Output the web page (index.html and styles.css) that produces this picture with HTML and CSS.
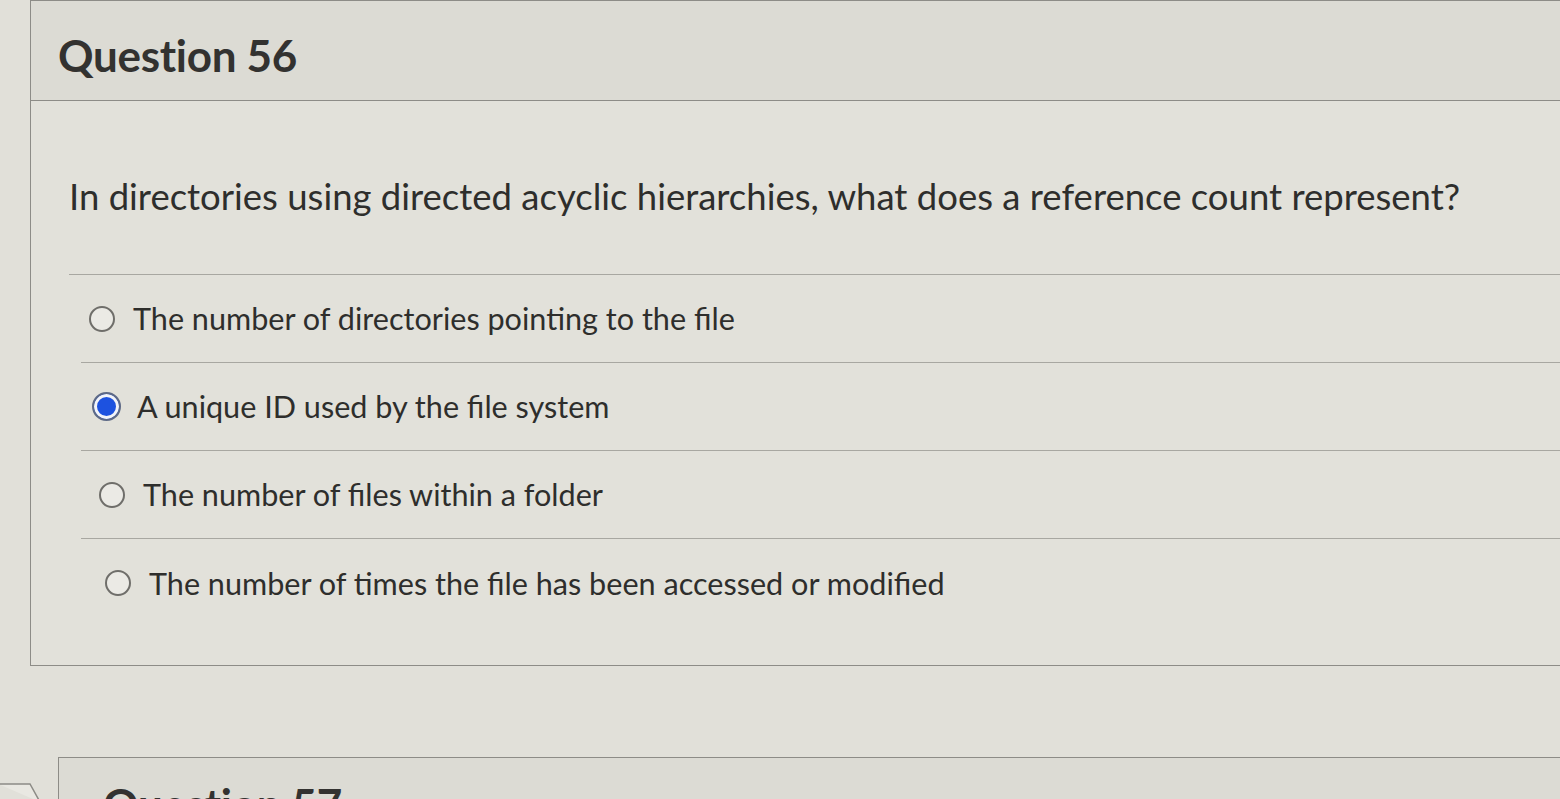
FILE: index.html
```html
<!DOCTYPE html>
<html lang="en">
<head>
  <meta charset="UTF-8" />
  <title>Quiz – Question 56</title>
  <link rel="stylesheet" href="styles.css">
</head>
<body>
  <div class="question-card">
    <div class="question-header">Question 56</div>
    <div class="question-body">
      <p class="question-text">In directories using directed acyclic hierarchies, what does a reference count represent?</p>
      <div class="answers">
        <label class="answer answer-1">
          <span class="radio"></span>
          <span class="answer-text">The number of directories pointing to the file</span>
        </label>
        <label class="answer answer-2">
          <span class="radio checked"></span>
          <span class="answer-text">A unique ID used by the file system</span>
        </label>
        <label class="answer answer-3">
          <span class="radio"></span>
          <span class="answer-text">The number of files within a folder</span>
        </label>
        <label class="answer answer-4">
          <span class="radio"></span>
          <span class="answer-text">The number of times the file has been accessed or modified</span>
        </label>
      </div>
    </div>
  </div>

  <div class="next-row">
    <svg class="flag" width="44" height="20" viewBox="0 0 44 20">
      <path d="M-2 1 H30 L40 19" fill="#e9e8e2" stroke="#8c8b86" stroke-width="1.5"/>
    </svg>
    <div class="question-card next-card">
      <div class="question-header">Question 57</div>
    </div>
  </div>
</body>
</html>
```

FILE: styles.css
```css
body, html {
  margin: 0;
  padding: 0;
  height: 100%;
  overflow: hidden;
  background: #e1e0d9;
  color: #2e2e2c;
  font-family: Lato, 'Open Sans', sans-serif;
}

.question-card {
  margin-left: 30px;
  width: 1600px;
  border: 1.5px solid #8d8c87;
  border-right: none;
  background: #e2e1da;
  box-sizing: border-box;
}

.question-header {
  height: 100px;
  box-sizing: border-box;
  padding: 28px 0 0 27px;
  background: #dcdbd4;
  border-bottom: 1.5px solid #8d8c87;
  font-size: 44px;
  font-weight: 700;
  letter-spacing: -0.3px;
  color: #333230;
}

.question-body {
  padding: 72px 0 38px 38px;
}

.question-text {
  margin: 0;
  font-size: 36.5px;
  line-height: 46px;
  padding-bottom: 55px;
  border-bottom: 1.5px solid #a8a7a1;
}

.answers {
  display: flex;
  flex-direction: column;
}

.answer {
  display: flex;
  align-items: center;
  gap: 18px;
  height: 88px;
  box-sizing: border-box;
  padding-left: 8px;
  margin-left: 12px;
  font-size: 30.6px;
  border-bottom: 1.5px solid #a8a7a1;
}

.answer-2 { padding-left: 11px; gap: 16px; }
.answer-3 { padding-left: 18px; }
.answer-4 {
  padding-left: 24px;
  border-bottom: none;
}

.radio {
  width: 26px;
  height: 26px;
  border-radius: 50%;
  border: 2px solid #6f6e6a;
  background: #ebeae5;
  box-sizing: border-box;
  flex-shrink: 0;
}

.radio.checked {
  width: 29px;
  height: 29px;
  border: 2px solid #5e6a86;
  background: #1d52e0;
  box-shadow: inset 0 0 0 3px #f3f4f8;
}

.next-row {
  display: flex;
  align-items: flex-start;
  margin-top: 91px;
}

.flag {
  margin-top: 26px;
  flex-shrink: 0;
}

.next-card {
  margin-left: 14px;
  height: 60px;
}

.next-card .question-header {
  border-bottom: none;
  padding-top: 20px;
  padding-left: 44px;
}
```
